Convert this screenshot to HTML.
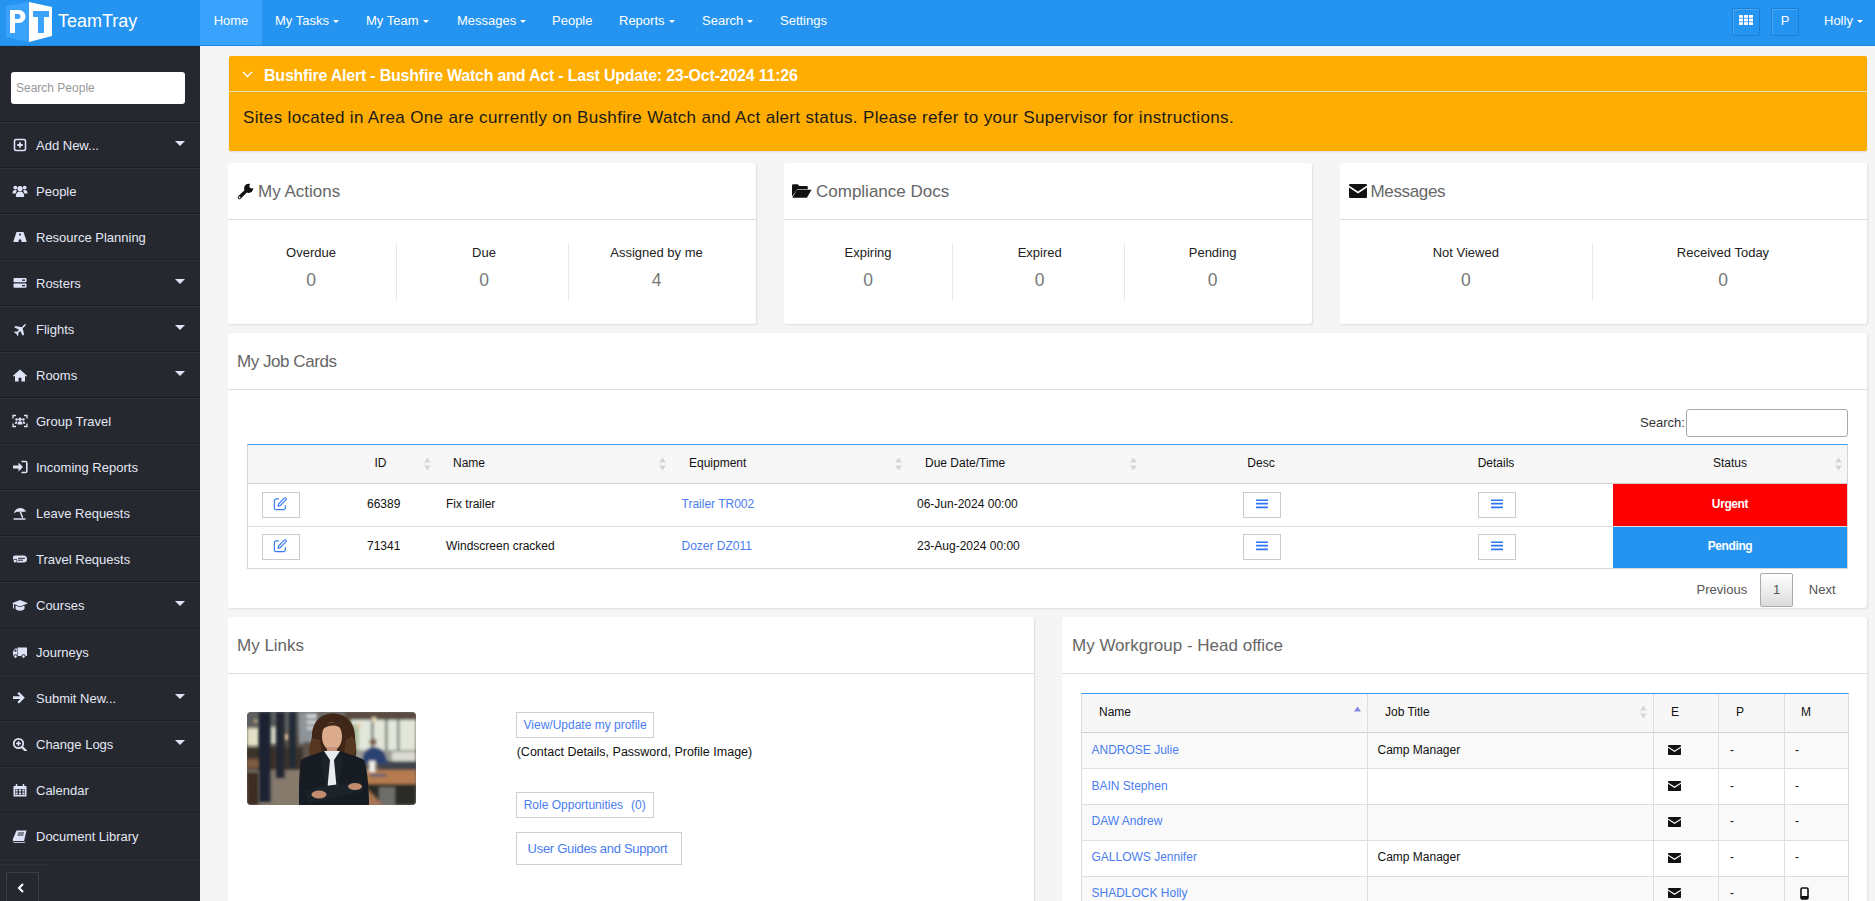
<!DOCTYPE html>
<html><head><meta charset="utf-8">
<style>
*{box-sizing:border-box;margin:0;padding:0}
html,body{width:1875px;height:901px;overflow:hidden}
body{position:relative;background:#f5f5f5;font-family:"Liberation Sans",sans-serif;color:#333}
.a{position:absolute}
.nw{white-space:nowrap}
/* navbar */
#nav{left:0;top:0;width:1875px;height:46px;background:#2494f0;border-bottom:1px solid #1b87e3}
.ni{position:absolute;top:0;height:45px;line-height:42px;font-size:13px;color:#fff;white-space:nowrap}
.car{display:inline-block;width:0;height:0;border-left:3px solid transparent;border-right:3px solid transparent;border-top:3px solid #fff;vertical-align:middle;margin-left:4px;margin-top:0px}
/* sidebar */
#side{left:0;top:46px;width:200px;height:855px;background:#25282f}
.si{position:absolute;left:0;width:200px;height:46px;border-top:1px solid #1d1f24;box-shadow:inset 0 1px 0 #2e3139}
.st{position:absolute;left:36px;top:1.5px;line-height:44px;font-size:13px;color:#e4e7f5;white-space:nowrap}
.sic{position:absolute;left:12px;top:16px;width:16px;height:14px}
.scar{position:absolute;left:175px;top:19px;width:0;height:0;border-left:5px solid transparent;border-right:5px solid transparent;border-top:5px solid #dfe3f6}
/* cards */
.card{position:absolute;background:#fff;border-radius:3px;box-shadow:1px 1px 2px rgba(0,0,0,.10)}
.ch{position:absolute;left:0;right:0;border-bottom:1px solid #dedede}
.ct{position:absolute;font-size:17px;color:#666;white-space:nowrap}
.lab{position:absolute;font-size:13px;color:#222;text-align:center;white-space:nowrap}
.val{position:absolute;font-size:18px;color:#777;text-align:center;white-space:nowrap}
.vd{position:absolute;width:1px;background:#e8e8e8}
/* tables */
.lab,.val,.ct{line-height:1}
.tb{position:absolute;font-size:12px;color:#111;white-space:nowrap}
.lnk{color:#4a7ef0}
</style></head><body>

<!-- NAVBAR -->
<div id="nav" class="a">
  <svg class="a" style="left:5px;top:1px" width="50" height="42" viewBox="0 0 50 42">
    <polygon points="1,5 24,1 24,41 1,36" fill="#3aa2fb"/>
    <polygon points="24,1 47,6 47,35 24,41" fill="#fff"/>
    <path d="M5 9 h9 a6 6 0 0 1 0 13 h-4 v10 h-5z M10 13 v5 h3 a2.5 2.5 0 0 0 0 -5z" fill="#fff" fill-rule="evenodd"/>
    <path d="M28 10 h16 v6 h-5 v16 h-6 v-16 h-5z" fill="#3aa2fb"/>
  </svg>
  <div class="a nw" style="left:58px;top:11.8px;font-size:18px;line-height:1;color:#fff">TeamTray</div>
  <div class="ni" style="left:200px;width:62px;background:#38a2fc;text-align:center">Home</div>
  <div class="ni" style="left:275px">My Tasks<span class="car"></span></div>
  <div class="ni" style="left:366px">My Team<span class="car"></span></div>
  <div class="ni" style="left:457px">Messages<span class="car"></span></div>
  <div class="ni" style="left:552px">People</div>
  <div class="ni" style="left:619px">Reports<span class="car"></span></div>
  <div class="ni" style="left:702px">Search<span class="car"></span></div>
  <div class="ni" style="left:780px">Settings</div>
  <div class="a" style="left:1732px;top:8px;width:28px;height:28px;border:1px solid #1a7fd6;border-radius:2px;box-shadow:inset 1px 1px 0 rgba(255,255,255,.18)"></div>
  <svg class="a" style="left:1739px;top:15px" width="14" height="10" viewBox="0 0 14 10"><g fill="#fff"><rect x="0" y="0" width="4" height="2.8"/><rect x="5" y="0" width="4" height="2.8"/><rect x="10" y="0" width="4" height="2.8"/><rect x="0" y="3.6" width="4" height="2.8"/><rect x="5" y="3.6" width="4" height="2.8"/><rect x="10" y="3.6" width="4" height="2.8"/><rect x="0" y="7.2" width="4" height="2.8"/><rect x="5" y="7.2" width="4" height="2.8"/><rect x="10" y="7.2" width="4" height="2.8"/></g></svg>
  <div class="a" style="left:1771px;top:8px;width:28px;height:28px;border:1px solid #1a7fd6;border-radius:2px;box-shadow:inset 1px 1px 0 rgba(255,255,255,.18);color:#fff;font-size:13px;text-align:center;line-height:24px">P</div>
  <div class="ni" style="left:1824px">Holly<span class="car"></span></div>
</div>

<!-- SIDEBAR -->
<div id="side" class="a">
  <div class="a" style="left:11px;top:26px;width:174px;height:32px;background:#fff;border-radius:3px;font-size:12px;color:#999;line-height:33px;padding-left:5px">Search People</div>
  <div class="si" style="top:75px"><svg class="sic" viewBox="0 0 16 14"><rect x="2.5" y="1.5" width="11" height="11" rx="1.5" fill="none" stroke="#dfe3f7" stroke-width="1.6"/><path d="M8 4.2v5.6M5.2 7h5.6" stroke="#dfe3f7" stroke-width="1.8"/></svg><div class="st">Add New...</div><div class="scar"></div></div>
  <div class="si" style="top:121px"><svg class="sic" viewBox="0 0 16 14"><circle cx="8" cy="4.5" r="2.6" fill="#dfe3f7"/><circle cx="3.3" cy="3.6" r="1.9" fill="#dfe3f7"/><circle cx="12.7" cy="3.6" r="1.9" fill="#dfe3f7"/><path d="M3.8 13c0-4 1.5-5.6 4.2-5.6s4.2 1.6 4.2 5.6z" fill="#dfe3f7"/><path d="M0.5 9.5c0-2.5 1-3.6 2.8-3.6 .8 0 1.3.3 1.7.6-.8.9-1.2 2-1.3 3z" fill="#dfe3f7"/><path d="M15.5 9.5c0-2.5-1-3.6-2.8-3.6-.8 0-1.3.3-1.7.6.8.9 1.2 2 1.3 3z" fill="#dfe3f7"/></svg><div class="st">People</div></div>
  <div class="si" style="top:167px"><svg class="sic" viewBox="0 0 16 14"><path d="M4.5 2h7l3.3 10h-5.3l-.3-2.6h-2.4l-.3 2.6h-5.3z M7.3 3.5l-.2 2h1.8l-.2-2z" fill="#dfe3f7" fill-rule="evenodd"/></svg><div class="st">Resource Planning</div></div>
  <div class="si" style="top:213px"><svg class="sic" viewBox="0 0 16 14"><rect x="1.5" y="2" width="13" height="4.3" rx="1" fill="#dfe3f7"/><rect x="1.5" y="7.5" width="13" height="4.3" rx="1" fill="#dfe3f7"/><rect x="10" y="3.5" width="3" height="1.3" fill="#25282f"/><rect x="10" y="9" width="3" height="1.3" fill="#25282f"/></svg><div class="st">Rosters</div><div class="scar"></div></div>
  <div class="si" style="top:259px"><svg class="sic" viewBox="0 0 16 14"><path d="M13.5 1.2c.8.8.2 2.2-.6 3l-2.2 2.1 1.4 6.2-1.3 1.3-2.6-4.8-2 1.9.3 2.1-1 1-1.2-2.3-2.3-1.2 1-1 2.1.3 1.9-2-4.8-2.6 1.3-1.3 6.2 1.4 2.1-2.2c.8-.8 2.2-1.4 3-.6z" fill="#dfe3f7"/></svg><div class="st">Flights</div><div class="scar"></div></div>
  <div class="si" style="top:305px"><svg class="sic" viewBox="0 0 16 14"><path d="M8 1.5l7 6.2-.9 1-1.1-.9v5.7h-3.6v-3.8h-2.8v3.8h-3.6v-5.7l-1.1.9-.9-1z" fill="#dfe3f7"/></svg><div class="st">Rooms</div><div class="scar"></div></div>
  <div class="si" style="top:351px"><svg class="sic" viewBox="0 0 16 14"><path d="M1 4.5v-3h3M12 1.5h3v3M15 9.5v3h-3M4 12.5h-3v-3" fill="none" stroke="#dfe3f7" stroke-width="1.3"/><circle cx="8" cy="5.2" r="1.7" fill="#dfe3f7"/><circle cx="4.6" cy="5.5" r="1.3" fill="#dfe3f7"/><circle cx="11.4" cy="5.5" r="1.3" fill="#dfe3f7"/><path d="M5.5 10.5c0-2.2 1-3.2 2.5-3.2s2.5 1 2.5 3.2z M2.8 9.8c0-1.5.6-2.3 1.8-2.3.4 0 .7.1 1 .3-.5.6-.7 1.3-.7 2z M13.2 9.8c0-1.5-.6-2.3-1.8-2.3-.4 0-.7.1-1 .3.5.6.7 1.3.7 2z" fill="#dfe3f7"/></svg><div class="st">Group Travel</div></div>
  <div class="si" style="top:397px"><svg class="sic" viewBox="0 0 16 14"><path d="M1 5.5h5.5v-3l4.5 4.5-4.5 4.5v-3h-5.5z" fill="#dfe3f7"/><path d="M9.5 1.5h4a1.3 1.3 0 0 1 1.3 1.3v8.4a1.3 1.3 0 0 1-1.3 1.3h-4" fill="none" stroke="#dfe3f7" stroke-width="1.6"/></svg><div class="st">Incoming Reports</div></div>
  <div class="si" style="top:443px"><svg class="sic" viewBox="0 0 16 14"><path d="M2 7.5c.5-3.5 3-5.5 6.5-5.5 2.5 0 4.8 1.5 5.7 4.2-1.2-.8-2.6-.8-3.6 0-1-.9-2.4-1-3.6-.2-1.4-.7-3.2-.3-5 1.5z" fill="#dfe3f7"/><path d="M8.3 5.8l2.3 6" stroke="#dfe3f7" stroke-width="1.5"/><path d="M1.5 13h12" stroke="#dfe3f7" stroke-width="1.5"/></svg><div class="st">Leave Requests</div></div>
  <div class="si" style="top:489px"><svg class="sic" viewBox="0 0 16 14"><path d="M3 3.5h8.5a3.5 3.5 0 0 1 0 7h-8.5a2 2 0 0 1-2-2v-3a2 2 0 0 1 2-2z" fill="#dfe3f7"/><path d="M6 6.3h7M6 8.2h5" stroke="#25282f" stroke-width="1"/><circle cx="3.2" cy="9" r="2.2" fill="#25282f"/><circle cx="3.2" cy="9" r="1.5" fill="#dfe3f7"/></svg><div class="st">Travel Requests</div></div>
  <div class="si" style="top:535px"><svg class="sic" viewBox="0 0 16 14"><path d="M8 2l8 3.3-8 3.3-8-3.3z" fill="#dfe3f7"/><path d="M3.5 7.5v3c0 1.2 2 2.2 4.5 2.2s4.5-1 4.5-2.2v-3l-4.5 1.8z" fill="#dfe3f7"/><path d="M1.5 5.5v5" stroke="#dfe3f7" stroke-width="1"/></svg><div class="st">Courses</div><div class="scar"></div></div>
  <div class="si" style="top:582px"><svg class="sic" viewBox="0 0 16 14"><path d="M5.5 2.5h9.5v8.5h-9.5z M1 6.5l2-3h2v7.5h-4z" fill="#dfe3f7"/><circle cx="3.5" cy="11.5" r="1.8" fill="#dfe3f7" stroke="#25282f" stroke-width="1"/><circle cx="11.5" cy="11.5" r="1.8" fill="#dfe3f7" stroke="#25282f" stroke-width="1"/><path d="M2 6.5l1.2-2h1.2v2z" fill="#25282f"/></svg><div class="st">Journeys</div></div>
  <div class="si" style="top:628px"><svg class="sic" viewBox="0 0 16 14"><path d="M1 5.3h7.2L5.4 2.5 7 0.9l5.8 5.8L7 12.5l-1.6-1.6 2.8-2.8H1z" fill="#dfe3f7"/></svg><div class="st">Submit New...</div><div class="scar"></div></div>
  <div class="si" style="top:674px"><svg class="sic" viewBox="0 0 16 14"><circle cx="6.5" cy="6.5" r="4.7" fill="none" stroke="#dfe3f7" stroke-width="1.8"/><path d="M10 10l3.8 3.8" stroke="#dfe3f7" stroke-width="2.4" stroke-linecap="round"/><path d="M6.5 4v5M4 6.5h5" stroke="#dfe3f7" stroke-width="1.5"/></svg><div class="st">Change Logs</div><div class="scar"></div></div>
  <div class="si" style="top:720px"><svg class="sic" viewBox="0 0 16 14"><path d="M1.5 3h13v10.5h-13z" fill="#dfe3f7"/><path d="M4.5 1v3M11.5 1v3" stroke="#dfe3f7" stroke-width="1.5"/><path d="M3 6h10v6h-10z" fill="#25282f"/><g fill="#dfe3f7"><rect x="3.5" y="6.5" width="2.2" height="2"/><rect x="6.9" y="6.5" width="2.2" height="2"/><rect x="10.3" y="6.5" width="2.2" height="2"/><rect x="3.5" y="9.5" width="2.2" height="2"/><rect x="6.9" y="9.5" width="2.2" height="2"/><rect x="10.3" y="9.5" width="2.2" height="2"/></g></svg><div class="st">Calendar</div></div>
  <div class="si" style="top:766px"><svg class="sic" viewBox="0 0 16 14"><path d="M4.5 1.5h10l-2.5 10.5h-10c-.8 0-1.5-.8-1.2-1.8z" fill="#dfe3f7"/><path d="M1.3 12.5c.2.8.7 1.2 1.4 1.2h9.8l.4-.9" fill="none" stroke="#dfe3f7" stroke-width="1"/><path d="M6 4h6M5.5 6h6" stroke="#25282f" stroke-width="1"/></svg><div class="st">Document Library</div></div>
  <div class="si" style="top:812px"></div>
  <div class="a" style="left:0;top:818px;width:48px;height:1px;background:#2c2f35"></div>
  <div class="a" style="left:6px;top:826px;width:33px;height:40px;border:1px solid #3a3d45;border-bottom:none"></div>
  <svg class="a" style="left:17px;top:837px" width="8" height="10" viewBox="0 0 8 10"><path d="M6 1L2 5l4 4" fill="none" stroke="#fff" stroke-width="2"/></svg>
</div>

<!-- ALERT -->
<div class="a" style="left:229px;top:56px;width:1638px;height:95px;background:#ffad00;border-radius:2px;box-shadow:0 1px 2px rgba(0,0,0,.12)"></div>
<div class="a" style="left:229px;top:91px;width:1638px;height:1px;background:#ecdcc0"></div>
<svg class="a" style="left:242px;top:71px" width="11" height="7" viewBox="0 0 11 7"><path d="M1 1l4.5 4.5L10 1" fill="none" stroke="#fff" stroke-width="1.3"/></svg>
<div class="a nw" style="left:264px;top:67px;font-size:16px;font-weight:bold;color:#fff;letter-spacing:-0.22px">Bushfire Alert - Bushfire Watch and Act - Last Update: 23-Oct-2024 11:26</div>
<div class="a nw" style="left:243px;top:108px;font-size:17px;color:#1a1a1a;letter-spacing:0.34px">Sites located in Area One are currently on Bushfire Watch and Act alert status. Please refer to your Supervisor for instructions.</div>

<!-- STAT CARDS -->
<div class="card" style="left:228px;top:163px;width:528px;height:161px">
  <div class="ch" style="top:0;height:57px"></div>
</div>
<div class="card" style="left:784px;top:163px;width:528px;height:161px">
  <div class="ch" style="top:0;height:57px"></div>
</div>
<div class="card" style="left:1340px;top:163px;width:527px;height:161px">
  <div class="ch" style="top:0;height:57px"></div>
</div>

<div class="ct" style="left:258px;top:183.3px">My Actions</div>
<div class="ct" style="left:816px;top:183.3px">Compliance Docs</div>
<div class="ct" style="left:1370.5px;top:183.3px;letter-spacing:-0.35px">Messages</div>
<svg class="a" style="left:237px;top:183px" width="17" height="17" viewBox="0 0 16 16"><path d="M2.3 13.7L8.6 7.4" stroke="#111" stroke-width="3.2" stroke-linecap="round"/><circle cx="11" cy="5" r="4.3" fill="#111"/><path d="M12.2 0.2 L16.5 0.2 L16.5 4.6 L13.6 5.2 L11.6 3.9z" fill="#fff"/><circle cx="2.4" cy="13.6" r="0.8" fill="#fff"/></svg>
<svg class="a" style="left:792px;top:184px" width="20" height="14" viewBox="0 0 20 14"><path d="M0 1.5a1.2 1.2 0 0 1 1.2-1.2h4.5l1.6 1.7h7.3a1.2 1.2 0 0 1 1.2 1.2v2h-10.5l-5.3 7.2z" fill="#111"/><path d="M4.8 5.8h14.8l-4.7 8h-14.6z" fill="#111"/></svg>
<svg class="a" style="left:1349px;top:184px" width="18" height="14" viewBox="0 0 18 14"><path d="M0 1a1 1 0 0 1 1-1h16a1 1 0 0 1 1 1v.6l-9 6-9-6z" fill="#111"/><path d="M0 3.6l9 6 9-6v9.4a1 1 0 0 1-1 1h-16a1 1 0 0 1-1-1z" fill="#111"/></svg>
<div class="lab" style="left:191.0px;top:246.3px;width:240px;font-size:13px">Overdue</div>
<div class="val" style="left:191.0px;top:272.4px;width:240px;font-size:17.5px">0</div>
<div class="lab" style="left:364.0px;top:246.3px;width:240px;font-size:13px">Due</div>
<div class="val" style="left:364.0px;top:272.4px;width:240px;font-size:17.5px">0</div>
<div class="lab" style="left:536.5px;top:246.3px;width:240px;font-size:13px">Assigned by me</div>
<div class="val" style="left:536.5px;top:272.4px;width:240px;font-size:17.5px">4</div>
<div class="lab" style="left:748.0px;top:246.3px;width:240px;font-size:13px">Expiring</div>
<div class="val" style="left:748.0px;top:272.4px;width:240px;font-size:17.5px">0</div>
<div class="lab" style="left:919.7px;top:246.3px;width:240px;font-size:13px">Expired</div>
<div class="val" style="left:919.7px;top:272.4px;width:240px;font-size:17.5px">0</div>
<div class="lab" style="left:1092.6px;top:246.3px;width:240px;font-size:13px">Pending</div>
<div class="val" style="left:1092.6px;top:272.4px;width:240px;font-size:17.5px">0</div>
<div class="lab" style="left:1345.8px;top:246.3px;width:240px;font-size:13px">Not Viewed</div>
<div class="val" style="left:1345.8px;top:272.4px;width:240px;font-size:17.5px">0</div>
<div class="lab" style="left:1603.0px;top:246.3px;width:240px;font-size:13px">Received Today</div>
<div class="val" style="left:1603.0px;top:272.4px;width:240px;font-size:17.5px">0</div>
<div class="vd" style="left:396px;top:243px;height:57px"></div>
<div class="vd" style="left:568px;top:243px;height:57px"></div>
<div class="vd" style="left:952px;top:243px;height:57px"></div>
<div class="vd" style="left:1124px;top:243px;height:57px"></div>
<div class="vd" style="left:1592px;top:243px;height:57px"></div>

<!-- JOB CARDS -->
<div class="card" style="left:228px;top:333px;width:1639px;height:275px">
  <div class="ch" style="top:0;height:57px"></div>
</div>

<!-- MY LINKS -->
<div class="card" style="left:228px;top:617px;width:806px;height:300px">
  <div class="ch" style="top:0;height:57px"></div>
</div>

<!-- WORKGROUP -->
<div class="card" style="left:1062px;top:617px;width:805px;height:300px">
  <div class="ch" style="top:0;height:57px"></div>
</div>

<!-- CONTENT2 -->
<div class="ct" style="left:237px;top:352.6px;font-size:17px;line-height:1;color:#666;letter-spacing:-0.45px">My Job Cards</div>
<div class="tb" style="left:1640px;top:416.4px;font-size:13px;line-height:1;color:#333;font-size:13px">Search:</div>
<div class="a" style="left:1686px;top:409px;width:162px;height:28px;border:1px solid #aaa;border-radius:3px;background:#fff"></div>
<div class="a" style="left:247px;top:444px;width:1601px;height:125px;border:1px solid #d6d6d6;border-top:1px solid #3d9bf0;background:#fff"></div>
<div class="a" style="left:248px;top:445px;width:1599px;height:38px;background:#f7f7f7"></div>
<div class="a" style="left:248px;top:483px;width:1599px;height:1px;background:#cfcfcf"></div>
<div class="a" style="left:248px;top:526px;width:1599px;height:1px;background:#dedede"></div>
<div class="a" style="left:1613px;top:484px;width:234px;height:42px;background:#ff0000"></div>
<div class="a" style="left:1613px;top:527px;width:234px;height:41px;background:#2494f0"></div>
<div class="tb" style="left:374.4px;top:457.0px;font-size:12px;line-height:1;">ID</div>
<svg class="a" style="left:423.5px;top:457.0px" width="7" height="14" viewBox="0 0 7 14"><path d="M3.5 0.5L7 5.5H0z M3.5 13.5L7 8.5H0z" fill="#d6d6d6"/></svg>
<div class="tb" style="left:453px;top:457.0px;font-size:12px;line-height:1;">Name</div>
<svg class="a" style="left:658.7px;top:457.0px" width="7" height="14" viewBox="0 0 7 14"><path d="M3.5 0.5L7 5.5H0z M3.5 13.5L7 8.5H0z" fill="#d6d6d6"/></svg>
<div class="tb" style="left:689px;top:457.0px;font-size:12px;line-height:1;">Equipment</div>
<svg class="a" style="left:894.7px;top:457.0px" width="7" height="14" viewBox="0 0 7 14"><path d="M3.5 0.5L7 5.5H0z M3.5 13.5L7 8.5H0z" fill="#d6d6d6"/></svg>
<div class="tb" style="left:925px;top:457.0px;font-size:12px;line-height:1;">Due Date/Time</div>
<svg class="a" style="left:1129.8px;top:457.0px" width="7" height="14" viewBox="0 0 7 14"><path d="M3.5 0.5L7 5.5H0z M3.5 13.5L7 8.5H0z" fill="#d6d6d6"/></svg>
<div class="tb" style="left:1141.0px;top:457.0px;width:240px;text-align:center;font-size:12px;line-height:1;">Desc</div>
<div class="tb" style="left:1376.0px;top:457.0px;width:240px;text-align:center;font-size:12px;line-height:1;">Details</div>
<div class="tb" style="left:1610.0px;top:457.0px;width:240px;text-align:center;font-size:12px;line-height:1;">Status</div>
<svg class="a" style="left:1834.5px;top:457.0px" width="7" height="14" viewBox="0 0 7 14"><path d="M3.5 0.5L7 5.5H0z M3.5 13.5L7 8.5H0z" fill="#d6d6d6"/></svg>
<div class="a" style="left:262px;top:492px;width:38px;height:26px;border:1px solid #cbcbcb;background:#fff"></div><svg class="a" style="left:273px;top:496.5px" width="14" height="14" viewBox="0 0 14 14"><path d="M5.5 1.8H3.2a1.8 1.8 0 0 0-1.8 1.8v7.3a1.8 1.8 0 0 0 1.8 1.8h7.3a1.8 1.8 0 0 0 1.8-1.8V8.6" fill="none" stroke="#3b7cf5" stroke-width="1.2" stroke-linecap="round"/><path d="M11.2 1.2a1.2 1.2 0 0 1 1.7 1.7L7.2 8.6 5 9.2l.6-2.2z" fill="none" stroke="#3b7cf5" stroke-width="1.2" stroke-linejoin="round"/></svg>
<div class="tb" style="left:367px;top:497.8px;font-size:12px;line-height:1;">66389</div>
<div class="tb" style="left:446px;top:497.8px;font-size:12px;line-height:1;">Fix trailer</div>
<div class="tb" style="left:681.5px;top:497.8px;font-size:12px;line-height:1;color:#4a7df0">Trailer TR002</div>
<div class="tb" style="left:917px;top:497.8px;font-size:12px;line-height:1;">06-Jun-2024 00:00</div>
<div class="a" style="left:1243px;top:492px;width:38px;height:26px;border:1px solid #cbcbcb;background:#fff"></div><svg class="a" style="left:1256px;top:499px" width="12" height="10" viewBox="0 0 12 10"><path d="M0.5 1.2h11M0.5 4.6h11M0.5 8.4h11" stroke="#2f74f5" stroke-width="1.6" stroke-linecap="round"/></svg>
<div class="a" style="left:1477.5px;top:492px;width:38px;height:26px;border:1px solid #cbcbcb;background:#fff"></div><svg class="a" style="left:1490.5px;top:499px" width="12" height="10" viewBox="0 0 12 10"><path d="M0.5 1.2h11M0.5 4.6h11M0.5 8.4h11" stroke="#2f74f5" stroke-width="1.6" stroke-linecap="round"/></svg>
<div class="tb" style="left:1610.0px;top:497.8px;width:240px;text-align:center;font-size:12px;line-height:1;color:#fff;font-weight:bold;letter-spacing:-0.4px">Urgent</div>
<div class="a" style="left:262px;top:534px;width:38px;height:26px;border:1px solid #cbcbcb;background:#fff"></div><svg class="a" style="left:273px;top:538.5px" width="14" height="14" viewBox="0 0 14 14"><path d="M5.5 1.8H3.2a1.8 1.8 0 0 0-1.8 1.8v7.3a1.8 1.8 0 0 0 1.8 1.8h7.3a1.8 1.8 0 0 0 1.8-1.8V8.6" fill="none" stroke="#3b7cf5" stroke-width="1.2" stroke-linecap="round"/><path d="M11.2 1.2a1.2 1.2 0 0 1 1.7 1.7L7.2 8.6 5 9.2l.6-2.2z" fill="none" stroke="#3b7cf5" stroke-width="1.2" stroke-linejoin="round"/></svg>
<div class="tb" style="left:367px;top:539.8px;font-size:12px;line-height:1;">71341</div>
<div class="tb" style="left:446px;top:539.8px;font-size:12px;line-height:1;">Windscreen cracked</div>
<div class="tb" style="left:681.5px;top:539.8px;font-size:12px;line-height:1;color:#4a7df0">Dozer DZ011</div>
<div class="tb" style="left:917px;top:539.8px;font-size:12px;line-height:1;">23-Aug-2024 00:00</div>
<div class="a" style="left:1243px;top:534px;width:38px;height:26px;border:1px solid #cbcbcb;background:#fff"></div><svg class="a" style="left:1256px;top:541px" width="12" height="10" viewBox="0 0 12 10"><path d="M0.5 1.2h11M0.5 4.6h11M0.5 8.4h11" stroke="#2f74f5" stroke-width="1.6" stroke-linecap="round"/></svg>
<div class="a" style="left:1477.5px;top:534px;width:38px;height:26px;border:1px solid #cbcbcb;background:#fff"></div><svg class="a" style="left:1490.5px;top:541px" width="12" height="10" viewBox="0 0 12 10"><path d="M0.5 1.2h11M0.5 4.6h11M0.5 8.4h11" stroke="#2f74f5" stroke-width="1.6" stroke-linecap="round"/></svg>
<div class="tb" style="left:1610.0px;top:539.8px;width:240px;text-align:center;font-size:12px;line-height:1;color:#fff;font-weight:bold;letter-spacing:-0.4px">Pending</div>
<div class="tb" style="left:1696.6px;top:583.0px;font-size:13px;line-height:1;color:#555">Previous</div>
<div class="a" style="left:1760px;top:573px;width:33px;height:34px;border:1px solid #aaa;border-radius:2px;background:linear-gradient(#fff,#dcdcdc)"></div>
<div class="tb" style="left:1761.5px;top:583.0px;width:30px;text-align:center;font-size:13px;line-height:1;color:#555">1</div>
<div class="tb" style="left:1808.8px;top:583.0px;font-size:13px;line-height:1;color:#555">Next</div>
<div class="ct" style="left:237px;top:637.1px;font-size:17px;line-height:1;color:#666">My Links</div>
<div class="ct" style="left:1072px;top:637.1px;font-size:17px;line-height:1;color:#666">My Workgroup - Head office</div>
<!-- PHOTO -->
<svg class="a" style="left:247px;top:712px" width="169" height="93" viewBox="0 0 169 93">
<defs>
<clipPath id="pc"><rect x="0" y="0" width="169" height="93" rx="4"/></clipPath>
<filter id="bb" x="-10%" y="-10%" width="120%" height="120%"><feGaussianBlur stdDeviation="1.8"/></filter>
<filter id="sb" x="-10%" y="-10%" width="120%" height="120%"><feGaussianBlur stdDeviation="0.6"/></filter>
<linearGradient id="lg" x1="0" y1="0" x2="0" y2="1"><stop offset="0" stop-color="#6d6c68"/><stop offset=".45" stop-color="#4d463f"/><stop offset="1" stop-color="#8a8072"/></linearGradient>
</defs>
<g clip-path="url(#pc)">
<rect width="169" height="93" fill="url(#lg)"/>
<g filter="url(#bb)">
 <rect x="0" y="0" width="64" height="14" fill="#5c5e5e"/>
 <rect x="0" y="16" width="12" height="18" fill="#e4e0c6"/>
 <rect x="22" y="15" width="9" height="17" fill="#d2d4c2"/>
 <rect x="0" y="36" width="64" height="22" fill="#3b3029"/>
 <rect x="0" y="47" width="14" height="9" fill="#7e5c40"/>
 <rect x="0" y="58" width="64" height="35" fill="#857a6c"/>
 <rect x="0" y="60" width="12" height="33" fill="#3d2c22"/>
 <circle cx="39" cy="25" r="3" fill="#e8c99a"/>
 <circle cx="9" cy="9" r="2" fill="#c0a37a"/>
 <rect x="52" y="0" width="18" height="32" fill="#8e9498"/>
 <rect x="60" y="3" width="10" height="2.5" fill="#e6eaee"/>
 <rect x="60" y="9" width="10" height="2.5" fill="#e0e4e8"/>
 <rect x="60" y="15" width="8" height="2.5" fill="#d8dce0"/>
 <rect x="56" y="30" width="16" height="30" fill="#5d534a"/>
 <rect x="98" y="0" width="71" height="9" fill="#5a4c40"/>
 <rect x="104" y="8" width="65" height="34" fill="#e2e7da"/>
 <rect x="103" y="12" width="9" height="26" fill="#aebf9f"/>
 <rect x="124" y="8" width="2.5" height="34" fill="#727872"/>
 <rect x="138" y="8" width="2.5" height="34" fill="#737973"/>
 <rect x="150" y="8" width="2.5" height="34" fill="#7d837e"/>
 <circle cx="127" cy="7.5" r="2.5" fill="#f0dab6"/>
 <circle cx="112" cy="14" r="2.2" fill="#e8cfaa"/>
 <rect x="106" y="38" width="63" height="12" fill="#9a9a94"/>
 <rect x="145" y="40" width="24" height="14" fill="#dcdcd4"/>
 <rect x="132" y="49" width="37" height="10" fill="#40454d"/>
 <path d="M115 52 C115 40 120 35 127 35 C134 35 139 40 141 52z" fill="#2a4372"/>
 <circle cx="126" cy="30" r="3.6" fill="#7c5c46"/>
 <rect x="112" y="58" width="57" height="14" fill="#b47c50"/>
 <rect x="112" y="72" width="57" height="21" fill="#2c2a28"/>
 <rect x="132" y="75" width="16" height="18" fill="#6d6d6a"/>
 <path d="M118 75 L136 93 L120 93 L116 80z" fill="#a87452"/>
 <rect x="122" y="49" width="6.5" height="11" fill="#f2f0ea"/>
 <rect x="123" y="62" width="16" height="2.5" fill="#4a5c78"/>
</g>
<g filter="url(#bb)">
 <rect x="12" y="0" width="11.5" height="90" fill="#1d2430"/>
 <rect x="29" y="0" width="8.5" height="66" fill="#202733"/>
 <rect x="42" y="0" width="7" height="56" fill="#232a36"/>
</g>
<g filter="url(#sb)">
 <path d="M86 1.5 C73 1.5 65 11 65 24 C64 32 61 40 64 46 L108 46 C111 40 108 32 108 24 C108 11 99 1.5 86 1.5z" fill="#3f2619"/>
 <path d="M66 26 C61 33 61 42 67 46 L75 42 L73 28z" fill="#573722"/>
 <path d="M105 24 C111 32 110 42 104 46 L97 42 L99 28z" fill="#573722"/>
 <ellipse cx="85" cy="24.5" rx="10" ry="14" fill="#dcab8e"/>
 <path d="M75 18 C76 9 94 8 96 18 C92 12 80 12 75 18z" fill="#3f2619"/>
 <rect x="80" y="35" width="10" height="8" fill="#c8937a"/>
 <path d="M54 48 C62 43 72 41 78 39 L85 50 L92 39 C98 41 108 43 117 48 C121 60 122 80 122 93 L52 93 C52 75 52 60 54 48z" fill="#161a22"/>
 <path d="M77 39 L93 39 L90 80 L81 80z" fill="#eaedf0"/>
 <path d="M77 39 L83 48 L80 80 L73 48z" fill="#1b2029"/>
 <path d="M93 39 L87 48 L90 80 L97 48z" fill="#1b2029"/>
 <path d="M58 78 C70 74 92 73 114 69 L117 79 C100 84 80 88 60 91z" fill="#1d222b"/>
 <ellipse cx="72" cy="82.5" rx="7.5" ry="4" fill="#c48c6e"/>
 <ellipse cx="108" cy="74.5" rx="7" ry="3.5" fill="#c48c6e"/>
</g>
</g>
</svg>
<!-- /PHOTO -->
<div class="a" style="left:516px;top:712px;width:138px;height:26px;border:1px solid #cfcfcf"></div>
<div class="tb" style="left:523.5px;top:719.0px;font-size:12px;line-height:1;color:#4a7df0">View/Update my profile</div>
<div class="tb" style="left:516.7px;top:746.0px;font-size:12.5px;line-height:1;color:#111">(Contact Details, Password, Profile Image)</div>
<div class="a" style="left:516px;top:792px;width:138px;height:26px;border:1px solid #cfcfcf"></div>
<div class="tb" style="left:523.7px;top:798.8px;font-size:12px;line-height:1;color:#4a7df0">Role Opportunities<span style="margin-left:8px">(0)</span></div>
<div class="a" style="left:516px;top:832px;width:166px;height:33px;border:1px solid #cfcfcf"></div>
<div class="tb" style="left:527.6px;top:841.8px;font-size:13px;line-height:1;color:#4a7df0;letter-spacing:-0.3px">User Guides and Support</div>
<div class="a" style="left:1081px;top:693px;width:768px;height:220px;border:1px solid #dcdcdc;border-top:1px solid #3d9bf0;background:#fff"></div>
<div class="a" style="left:1082px;top:694px;width:766px;height:38px;background:#f7f7f7"></div>
<div class="a" style="left:1082px;top:732px;width:766px;height:1px;background:#cfcfcf"></div>
<div class="a" style="left:1082px;top:733px;width:766px;height:35px;background:#f9f9f9"></div>
<div class="a" style="left:1082px;top:768px;width:766px;height:1px;background:#dedede"></div>
<div class="a" style="left:1082px;top:804px;width:766px;height:1px;background:#dedede"></div>
<div class="a" style="left:1082px;top:805px;width:766px;height:35px;background:#f9f9f9"></div>
<div class="a" style="left:1082px;top:840px;width:766px;height:1px;background:#dedede"></div>
<div class="a" style="left:1082px;top:876px;width:766px;height:1px;background:#dedede"></div>
<div class="a" style="left:1082px;top:877px;width:766px;height:35px;background:#f9f9f9"></div>
<div class="a" style="left:1367px;top:694px;width:1px;height:220px;background:#dedede"></div>
<div class="a" style="left:1653px;top:694px;width:1px;height:220px;background:#dedede"></div>
<div class="a" style="left:1718px;top:694px;width:1px;height:220px;background:#dedede"></div>
<div class="a" style="left:1784px;top:694px;width:1px;height:220px;background:#dedede"></div>
<div class="tb" style="left:1099px;top:705.9px;font-size:12px;line-height:1;">Name</div>
<svg class="a" style="left:1354px;top:706px" width="7" height="6" viewBox="0 0 7 6"><path d="M3.5 0.5L7 5.5H0z" fill="#7f86e6"/></svg>
<div class="tb" style="left:1385px;top:705.9px;font-size:12px;line-height:1;">Job Title</div>
<svg class="a" style="left:1640px;top:705px" width="7" height="14" viewBox="0 0 7 14"><path d="M3.5 0.5L7 5.5H0z M3.5 13.5L7 8.5H0z" fill="#d6d6d6"/></svg>
<div class="tb" style="left:1671px;top:705.9px;font-size:12px;line-height:1;">E</div>
<div class="tb" style="left:1736px;top:705.9px;font-size:12px;line-height:1;">P</div>
<div class="tb" style="left:1801px;top:705.9px;font-size:12px;line-height:1;">M</div>
<div class="tb" style="left:1091.5px;top:743.8px;font-size:12px;line-height:1;color:#4a7df0">ANDROSE Julie</div>
<div class="tb" style="left:1377.5px;top:743.8px;font-size:12px;line-height:1;">Camp Manager</div>
<svg class="a" style="left:1667.5px;top:745px" width="13" height="10" viewBox="0 0 13 10"><path d="M0 .8a.8.8 0 0 1 .8-.8h11.4a.8.8 0 0 1 .8.8v.6l-6.5 4.2L0 1.4z" fill="#111"/><path d="M0 2.8l6.5 4.2 6.5-4.2v6.4a.8.8 0 0 1-.8.8H.8a.8.8 0 0 1-.8-.8z" fill="#111"/></svg>
<div class="tb" style="left:1730px;top:743.8px;font-size:12px;line-height:1;">-</div>
<div class="tb" style="left:1795px;top:743.8px;font-size:12px;line-height:1;">-</div>
<div class="tb" style="left:1091.5px;top:779.8px;font-size:12px;line-height:1;color:#4a7df0">BAIN Stephen</div>
<svg class="a" style="left:1667.5px;top:781px" width="13" height="10" viewBox="0 0 13 10"><path d="M0 .8a.8.8 0 0 1 .8-.8h11.4a.8.8 0 0 1 .8.8v.6l-6.5 4.2L0 1.4z" fill="#111"/><path d="M0 2.8l6.5 4.2 6.5-4.2v6.4a.8.8 0 0 1-.8.8H.8a.8.8 0 0 1-.8-.8z" fill="#111"/></svg>
<div class="tb" style="left:1730px;top:779.8px;font-size:12px;line-height:1;">-</div>
<div class="tb" style="left:1795px;top:779.8px;font-size:12px;line-height:1;">-</div>
<div class="tb" style="left:1091.5px;top:815.3px;font-size:12px;line-height:1;color:#4a7df0">DAW Andrew</div>
<svg class="a" style="left:1667.5px;top:816.5px" width="13" height="10" viewBox="0 0 13 10"><path d="M0 .8a.8.8 0 0 1 .8-.8h11.4a.8.8 0 0 1 .8.8v.6l-6.5 4.2L0 1.4z" fill="#111"/><path d="M0 2.8l6.5 4.2 6.5-4.2v6.4a.8.8 0 0 1-.8.8H.8a.8.8 0 0 1-.8-.8z" fill="#111"/></svg>
<div class="tb" style="left:1730px;top:815.3px;font-size:12px;line-height:1;">-</div>
<div class="tb" style="left:1795px;top:815.3px;font-size:12px;line-height:1;">-</div>
<div class="tb" style="left:1091.5px;top:851.3px;font-size:12px;line-height:1;color:#4a7df0">GALLOWS Jennifer</div>
<div class="tb" style="left:1377.5px;top:851.3px;font-size:12px;line-height:1;">Camp Manager</div>
<svg class="a" style="left:1667.5px;top:852.5px" width="13" height="10" viewBox="0 0 13 10"><path d="M0 .8a.8.8 0 0 1 .8-.8h11.4a.8.8 0 0 1 .8.8v.6l-6.5 4.2L0 1.4z" fill="#111"/><path d="M0 2.8l6.5 4.2 6.5-4.2v6.4a.8.8 0 0 1-.8.8H.8a.8.8 0 0 1-.8-.8z" fill="#111"/></svg>
<div class="tb" style="left:1730px;top:851.3px;font-size:12px;line-height:1;">-</div>
<div class="tb" style="left:1795px;top:851.3px;font-size:12px;line-height:1;">-</div>
<div class="tb" style="left:1091.5px;top:886.8px;font-size:12px;line-height:1;color:#4a7df0">SHADLOCK Holly</div>
<svg class="a" style="left:1667.5px;top:888px" width="13" height="10" viewBox="0 0 13 10"><path d="M0 .8a.8.8 0 0 1 .8-.8h11.4a.8.8 0 0 1 .8.8v.6l-6.5 4.2L0 1.4z" fill="#111"/><path d="M0 2.8l6.5 4.2 6.5-4.2v6.4a.8.8 0 0 1-.8.8H.8a.8.8 0 0 1-.8-.8z" fill="#111"/></svg>
<div class="tb" style="left:1730px;top:886.8px;font-size:12px;line-height:1;">-</div>
<svg class="a" style="left:1800px;top:887.0px" width="9" height="13" viewBox="0 0 9 13"><rect x="1" y="1" width="7" height="11" rx="1.2" fill="none" stroke="#111" stroke-width="1.6"/><rect x="1" y="9" width="7" height="3" fill="#111"/></svg>
<!-- /CONTENT2 -->
</body></html>
